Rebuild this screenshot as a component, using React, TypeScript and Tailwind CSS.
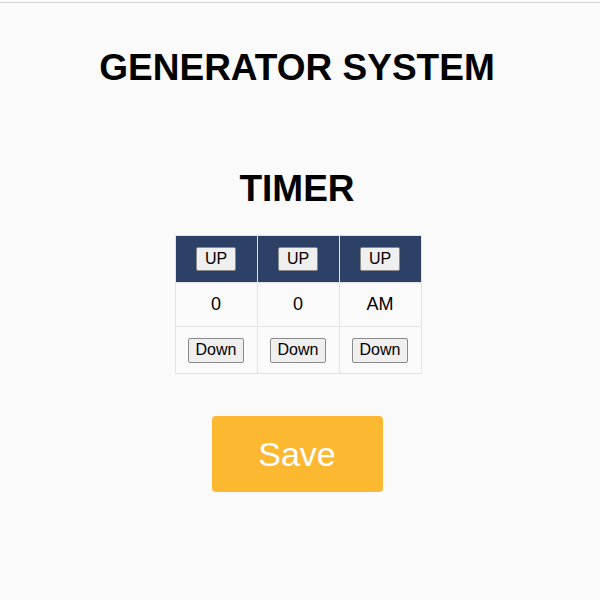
export default function App() {
  const font = { fontFamily: '"Liberation Sans", Arial, sans-serif' };
  const cols = [0, 1, 2];
  return (
    <div className="min-h-[600px] bg-[#fafafa] pt-[2px] text-black" style={font}>
      <div className="border-t border-[#d4d4d4]" />
      <h1 className="mt-[44px] text-center text-[37px] font-bold leading-[42px]">
        <span className="mr-[6px]">GENERATOR SYSTEM</span>
      </h1>
      <h2 className="mt-[79px] text-center text-[37px] font-bold leading-[42px]">
        <span className="mr-[6px]">TIMER</span>
      </h2>
      <div className="mt-[25px] flex justify-center">
        <table className="border-collapse mr-[4px]">
          <tbody>
            <tr className="h-[47px] bg-[#2d4066]">
              {cols.map((i) => (
                <td key={i} className="w-[82px] border border-[#e3e3e3] text-center p-0">
                  <button className="w-[40px] h-[24px] bg-[#efefef] border border-[#8a8a8a] rounded-[2px] text-[16px] leading-none text-black">
                    UP
                  </button>
                </td>
              ))}
            </tr>
            <tr className="h-[44px]">
              {["0", "0", "AM"].map((v, i) => (
                <td key={i} className="w-[82px] border border-[#e3e3e3] text-center text-[18px] p-0">
                  {v}
                </td>
              ))}
            </tr>
            <tr className="h-[47px]">
              {cols.map((i) => (
                <td key={i} className="w-[82px] border border-[#e3e3e3] text-center p-0">
                  <button className="w-[56px] h-[25px] bg-[#efefef] border border-[#8a8a8a] rounded-[2px] text-[16px] leading-none text-black">
                    Down
                  </button>
                </td>
              ))}
            </tr>
          </tbody>
        </table>
      </div>
      <div className="mt-[42px] flex justify-center">
        <button className="ml-[-6px] w-[171px] h-[76px] bg-[#fdb831] rounded-[4px] text-white text-[34px] leading-none">
          Save
        </button>
      </div>
    </div>
  );
}
